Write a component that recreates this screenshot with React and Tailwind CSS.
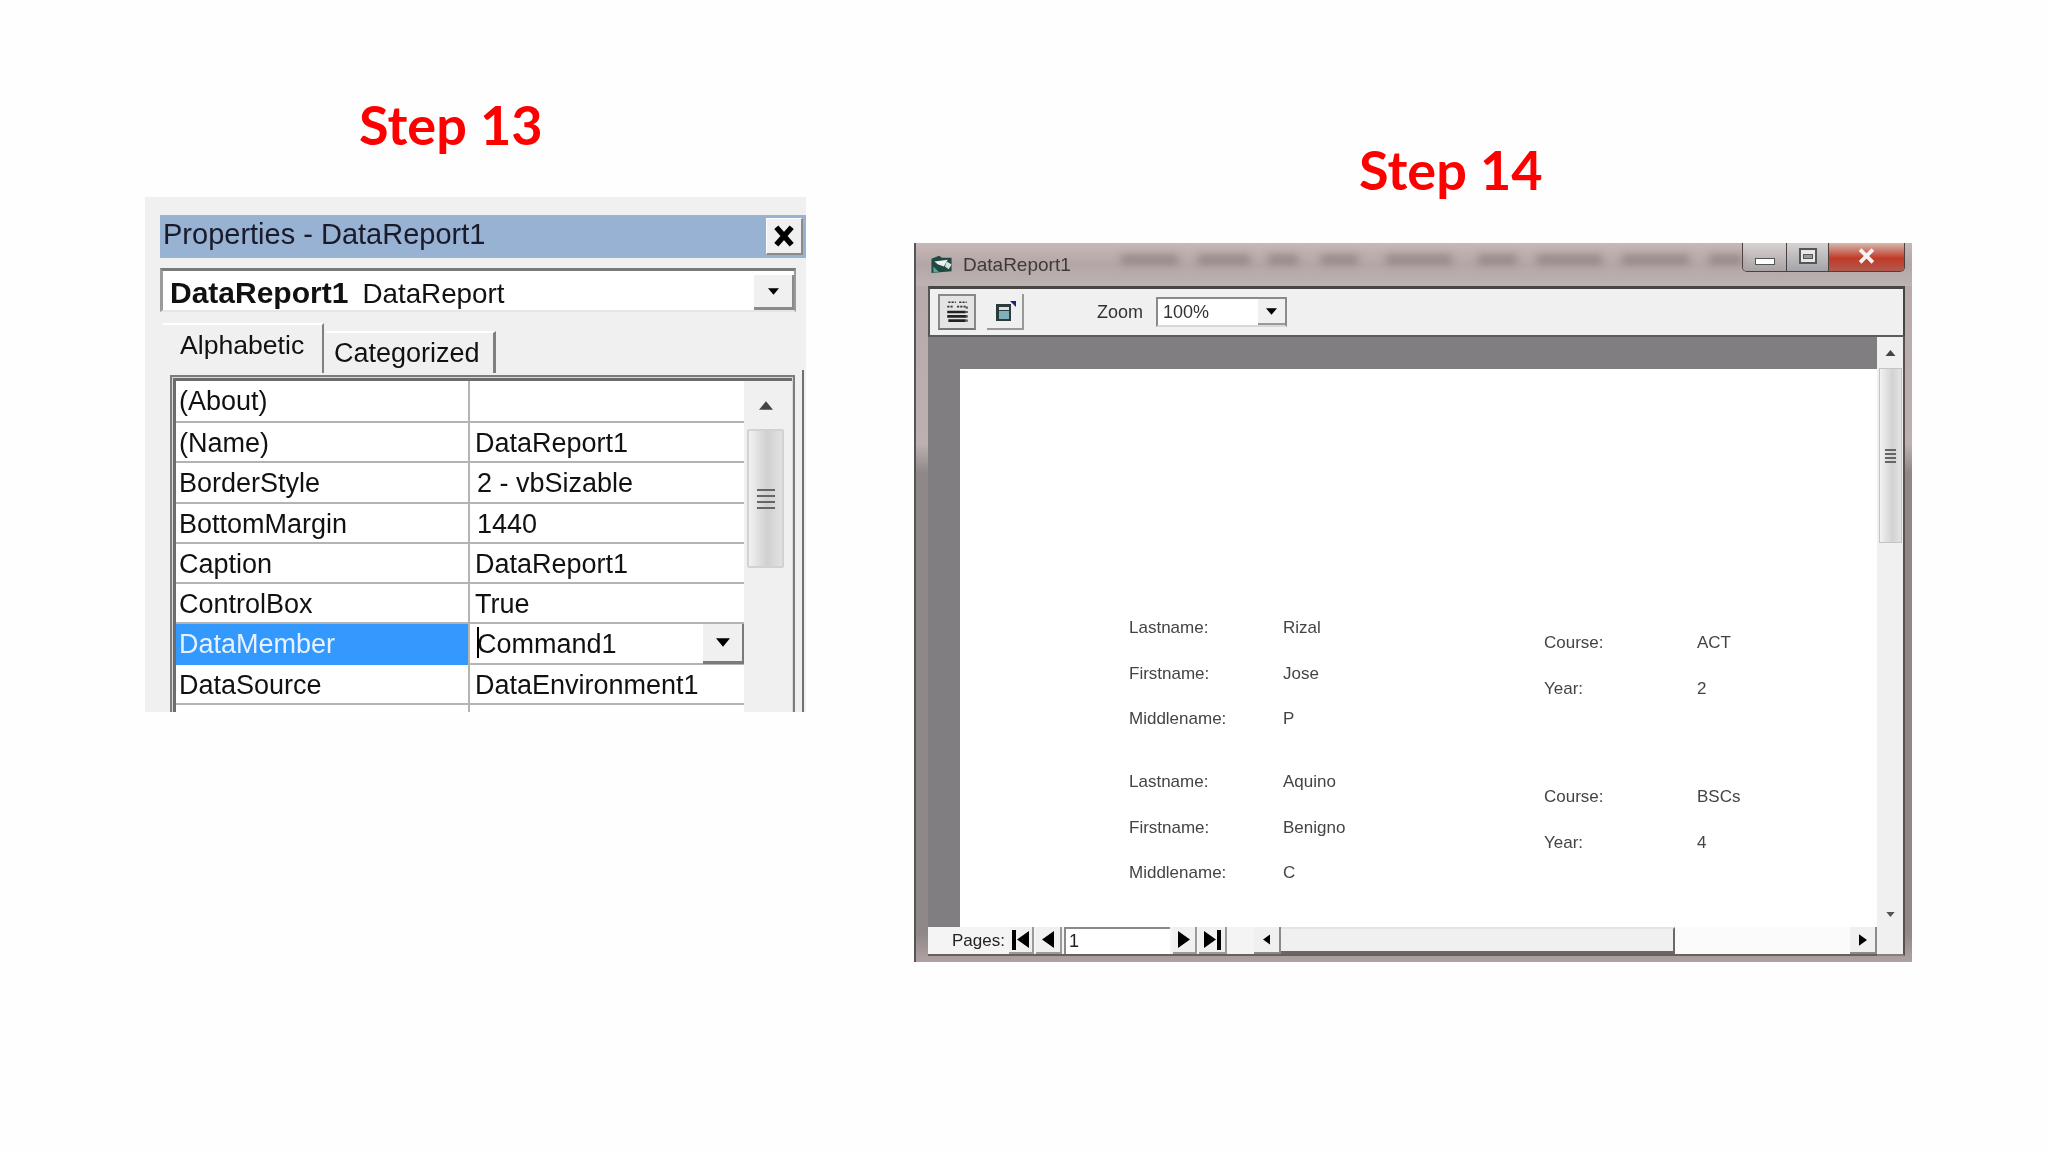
import React from 'react'

const ROWS = [
  ['(About)', ''],
  ['(Name)', 'DataReport1'],
  ['BorderStyle', '2 - vbSizable'],
  ['BottomMargin', '1440'],
  ['Caption', 'DataReport1'],
  ['ControlBox', 'True'],
  ['DataMember', 'Command1'],
  ['DataSource', 'DataEnvironment1'],
  ['', ''],
]

const RECORDS = [
  { last: 'Rizal', first: 'Jose', middle: 'P', course: 'ACT', year: '2' },
  { last: 'Aquino', first: 'Benigno', middle: 'C', course: 'BSCs', year: '4' },
]

const BLURS = ['w-[57px] ml-[45px]', 'w-[52px] ml-[20px]', 'w-[30px] ml-[18px]', 'w-[37px] ml-[23px]', 'w-[66px] ml-[28px]', 'w-[39px] ml-[26px]', 'w-[65px] ml-[20px]', 'w-[67px] ml-[20px]', 'w-[33px] ml-[20px]']

const Tri = ({ dir = 'down', className = '' }) => {
  const pts = { down: '0,0 10,0 5,6', up: '0,6 10,6 5,0', left: '7,0 7,10 0,5', right: '0,0 0,10 7,5' }[dir]
  const box = dir === 'left' || dir === 'right' ? '0 0 7 10' : '0 0 10 6'
  return <svg viewBox={box} className={className}><polygon points={pts} fill="currentColor" /></svg>
}

const Grip = ({ className = '' }) => (
  <div className={`flex flex-col ${className}`}>
    <div className="h-[2px] bg-[#666]" />
    <div className="h-[2px] bg-[#666]" />
    <div className="h-[2px] bg-[#666]" />
    <div className="h-[2px] bg-[#666]" />
  </div>
)

const NavBtn = ({ width, dir, bar }) => (
  <div className={`${width} h-full flex items-center justify-center gap-[1px] bg-[#f0f0f0] border-r-2 border-b-2 border-[#9a9a9a] text-black`}>
    {bar === 'left' && <div className="w-[4px] h-[20px] bg-black" />}
    <Tri dir={dir} className="w-[12px] h-[21px]" />
    {bar === 'right' && <div className="w-[4px] h-[20px] bg-black" />}
  </div>
)

const Field = ({ label, value, labelWidth }) => (
  <div className="flex items-center h-[45.7px] text-[17px] text-[#444]">
    <span className={labelWidth}>{label}</span>
    <span>{value}</span>
  </div>
)

export default function App() {
  return (
    <div className="w-[2048px] h-[1152px] bg-[#fefefe] flex items-start overflow-hidden font-['Liberation_Sans',sans-serif]">
      {/* Step 13 */}
      <div className="ml-[145px] w-[661px] flex flex-col">
        <h1 className="ml-[214px] mt-[89px] h-[108px] font-['Lato',sans-serif] font-bold text-[54px] leading-[72px] text-[#ff0000]">Step 13</h1>
        <div className="h-[515px] bg-[#f0f0f0] overflow-hidden pl-[15px] pt-[18px] blur-[0.4px]">
          <div className="h-[43px] bg-[#97b2d2] flex items-center justify-between pl-[3px] pr-[3px]">
            <span className="text-[29px] text-[#1a1a2a] pb-1">Properties - DataReport1</span>
            <div className="w-[37px] h-[37px] bg-[#f0f0f0] border-r-2 border-b-2 border-[#8a8a8a] border-t border-l border-t-white border-l-white flex items-center justify-center">
              <svg viewBox="0 0 20 20" className="w-[22px] h-[24px]"><path d="M3 2 L17 18 M17 2 L3 18" stroke="#000" strokeWidth="5" /></svg>
            </div>
          </div>

          <div className="mt-[10px] w-[636px] h-[44px] bg-white border-t-[3px] border-l-[3px] border-r-[2px] border-b-[2px] border-t-[#7a7a7a] border-l-[#9a9a9a] border-r-[#9a9a9a] border-b-[#e6e6e6] flex items-center justify-between pl-[7px]">
            <span className="text-[27.8px] text-[#111] pt-[3px]"><b className="text-[30px] mr-[14px]">DataReport1</b>DataReport</span>
            <div className="w-[40px] h-[35px] mt-[4px] bg-[#f0f0f0] border-r-2 border-b-[3px] border-[#8a8a8a] flex items-center justify-center">
              <Tri className="w-[11px] h-[7px] text-black" />
            </div>
          </div>

          <div className="mt-[11px] h-[50px] flex items-end ml-[3px] text-[#111]">
            <div className="w-[161px] h-[50px] border-t-2 border-t-white border-r-2 border-r-[#808080] flex items-center pl-[17px] pb-[6px] text-[26.6px]">Alphabetic</div>
            <div className="ml-[2px] w-[170px] h-[42px] border-t-2 border-t-white border-r-[3px] border-r-[#808080] flex items-center pl-[8px] text-[27px]">Categorized</div>
          </div>

          <div className="mt-[2px] ml-[10px] flex items-stretch">
            <div className="w-[625px] border-[2px] border-[#7c7c7c] bg-[#d9d9d9] p-[1px]">
              <div className="border-l-[3px] border-t-[3px] border-[#6c6c6c] bg-[#f0f0f0] flex">
                <div className="w-[568px] bg-white">
                  {ROWS.map(([name, value], i) => (
                    <div key={i} className={`grid grid-cols-[294px_1fr] text-[27px] text-[#111] ${i === 0 ? 'h-[42px]' : 'h-[40.3px]'} border-b-2 border-[#b4b4b4]`}>
                      <div className={`flex items-center pl-[3px] border-r-2 border-[#b4b4b4] ${name === 'DataMember' ? 'bg-[#3399ff] text-[#e8f2ff]' : ''}`}>{name}</div>
                      {name === 'DataMember' ? (
                        <div className="flex items-center relative">
                          <div className="absolute left-[7px] top-[3px] w-[2px] h-[31px] bg-black" />
                          <span className="pl-[7px]">{value}</span>
                          <div className="ml-auto w-[41px] h-[40px] -mt-[2px] bg-[#f0f0f0] border-r-2 border-b-[3px] border-[#7a7a7a] flex items-center justify-center">
                            <Tri className="w-[14px] h-[9px] text-black" />
                          </div>
                        </div>
                      ) : (
                        <div className={`flex items-center ${/^[12] ?/.test(value) ? 'pl-[7px]' : 'pl-[5px]'}`}>{value}</div>
                      )}
                    </div>
                  ))}
                </div>
                <div className="w-[43px] flex flex-col items-start pl-[3px]">
                  <div className="h-[48px] w-full flex items-center justify-center pr-[3px]">
                    <Tri dir="up" className="w-[14px] h-[9px] text-[#444]" />
                  </div>
                  <div className="w-[37px] h-[139px] bg-[linear-gradient(to_right,#f2f2f2,#d0d0d0_55%,#e2e2e2)] border-2 border-[#d2d2d2] rounded-[2px] flex items-center justify-center">
                    <Grip className="w-[18px] gap-[4px]" />
                  </div>
                </div>
              </div>
            </div>
            <div className="ml-[7px] -mt-[5px] w-[2px] bg-[#707070]" />
          </div>
        </div>
      </div>

      {/* Step 14 */}
      <div className="ml-[108px] w-[998px] flex flex-col">
        <h1 className="ml-[445px] mt-[134px] h-[109px] font-['Lato',sans-serif] font-bold text-[54px] leading-[72px] text-[#ff0000]">Step 14</h1>
        <div className="h-[719px] flex flex-col pl-[12px] pr-[7px] pb-[6px] border-l-2 border-[#555] blur-[0.4px] bg-[linear-gradient(to_bottom,#b7a9a9_0%,#bcb0b0_28%,#8f8888_32%,#8f8888_96%,#b0a2a2_100%)]">
          {/* title bar */}
          <div className="h-[43px] -ml-[12px] -mr-[7px] pl-[14px] pr-[7px] flex items-start bg-[linear-gradient(to_bottom,#c8b8b8,#b3a6a6_50%,#bdb3b3)]">
            <svg viewBox="0 0 24 24" className="w-[24px] h-[23px] mt-[9px]">
              <path d="M1 7 L9 4 L12 6 L22 6 L22 20 L1 22 Z" fill="#1f4a44" />
              <path d="M4 10 L18 8 L14 15 L8 13 Z" fill="#eef2ee" />
              <path d="M17 10 L22 13 L19 18 L15 15 Z" fill="#d8e0dc" />
              <path d="M3 15 L9 21 L3 21 Z" fill="#58a890" />
            </svg>
            <span className="ml-[9px] mt-[8px] text-[19px] leading-[28px] text-[#3f3a3a]">DataReport1</span>
            <div className="flex items-center h-[30px] pl-[5px]">
              {BLURS.map((b, i) => (
                <div key={i} className={`${b} h-[9px] mt-[2px] bg-[#6e6060] opacity-50 blur-[4px]`} />
              ))}
            </div>
            <div className="ml-auto flex h-[29px] w-[163px] rounded-b-[5px] border border-t-0 border-[#4a4040] overflow-hidden">
              <div className="w-[44px] flex items-end justify-center pb-[6px] border-r border-[#4a4040] bg-[linear-gradient(to_bottom,#d8d2d2,#a9a2a2)]">
                <div className="w-[20px] h-[7px] bg-white border border-[#555]" />
              </div>
              <div className="w-[42px] flex items-center justify-center pb-[2px] border-r border-[#4a4040] bg-[linear-gradient(to_bottom,#d8d2d2,#a3a3a8)]">
                <div className="w-[18px] h-[16px] bg-[#e8e8e8] border-2 border-[#555] flex items-center justify-center">
                  <div className="w-[10px] h-[5px] bg-[#999] border border-[#555]" />
                </div>
              </div>
              <div className="flex-1 flex items-start justify-center pt-[5px] bg-[linear-gradient(to_bottom,#d5b8b0,#c03a26_55%,#b25a50)]">
                <svg viewBox="0 0 16 14" className="w-[17px] h-[16px]"><path d="M2 1 L14 13 M14 1 L2 13" stroke="#f4f4f4" strokeWidth="3.5" /></svg>
              </div>
            </div>
          </div>

          {/* toolbar */}
          <div className="h-[51px] bg-[#f0f0f0] border-t-[3px] border-b-2 border-l-2 border-r-2 border-t-[#4a4545] border-b-[#5c5c5c] border-l-[#555] border-r-[#444] flex items-center pl-[8px] shrink-0">
            <div className="w-[38px] h-[36px] bg-[#e4e4e4] border-2 border-[#888] border-b-[#777] flex items-center justify-center">
              <svg viewBox="0 0 24 24" className="w-[26px] h-[26px]">
                <path d="M4 3 H11 M14 3 H21 M3 7 H9 M12 7 H20" stroke="#333" strokeWidth="1.5" strokeDasharray="2 1" />
                <path d="M3 12 H20 M3 16 H21 M4 20 H20" stroke="#222" strokeWidth="2.4" />
                <path d="M21 7 V22" stroke="#555" strokeWidth="2" strokeDasharray="2 2" />
              </svg>
            </div>
            <div className="ml-[11px] w-[37px] h-[36px] border-r-2 border-b-2 border-[#999] flex items-center justify-center">
              <svg viewBox="0 0 24 24" className="w-[24px] h-[24px]">
                <path d="M17 2 H23 V8 Z" fill="#22227a" />
                <rect x="3" y="5" width="15" height="17" fill="#2c3a3a" />
                <rect x="6" y="8" width="10" height="3" fill="#d8e0e0" />
                <rect x="6" y="12" width="10" height="8" fill="#7fb0b8" />
              </svg>
            </div>
            <span className="ml-[73px] text-[18px] text-[#333]">Zoom</span>
            <div className="ml-[13px] w-[131px] h-[30px] bg-white border-2 border-[#8a8a8a] border-b-[#d8d8d8] border-r-[#8a8a8a] flex items-center justify-between pl-[5px]">
              <span className="text-[18px] text-[#333]">100%</span>
              <div className="w-[27px] h-full bg-[#f0f0f0] border-b-2 border-[#999] flex items-center justify-center">
                <Tri className="w-[11px] h-[7px] text-black" />
              </div>
            </div>
          </div>

          {/* report area */}
          <div className="flex-1 flex min-h-0">
            <div className="w-[950px] flex flex-col">
              <div className="flex-1 bg-[#807e80] pt-[32px] pl-[32px] min-h-0">
                <div className="h-full bg-white pt-[236px] pl-[169px]">
                  {RECORDS.map((r, i) => (
                    <div key={i} className="h-[154px] flex items-start">
                      <div className="w-[415px]">
                        <Field label="Lastname:" value={r.last} labelWidth="w-[154px]" />
                        <Field label="Firstname:" value={r.first} labelWidth="w-[154px]" />
                        <Field label="Middlename:" value={r.middle} labelWidth="w-[154px]" />
                      </div>
                      <div className="mt-[15px]">
                        <Field label="Course:" value={r.course} labelWidth="w-[153px]" />
                        <Field label="Year:" value={r.year} labelWidth="w-[153px]" />
                      </div>
                    </div>
                  ))}
                </div>
              </div>
              <div className="h-[29px] shrink-0 bg-[#f4f4f4] border-b-2 border-[#6a5f5f] flex items-stretch pl-[24px]">
                <span className="w-[57px] self-center text-[17px] text-[#222]">Pages:</span>
                <NavBtn width="w-[25px]" dir="left" bar="left" />
                <div className="w-[2px]" />
                <NavBtn width="w-[26px]" dir="left" />
                <div className="ml-[2px] w-[106px] bg-white border-t-2 border-l-2 border-[#8a8a8a] pl-[3px] text-[18px] leading-[24px] text-[#222]">1</div>
                <div className="w-[3px]" />
                <NavBtn width="w-[24px]" dir="right" />
                <div className="w-[2px]" />
                <NavBtn width="w-[28px]" dir="right" bar="right" />
                <div className="w-[27px]" />
                <div className="w-[27px] bg-[#f0f0f0] border-r-2 border-b-2 border-[#8a8a8a] flex items-center justify-center">
                  <Tri dir="left" className="w-[7px] h-[11px] text-black" />
                </div>
                <div className="w-[394px] bg-[#f0f0f0] border-t-2 border-t-[#e4e4e4] border-r-2 border-r-[#6a6a6a] border-b-[3px] border-b-[#6f6464]" />
                <div className="w-[175px] bg-[#fbfbfb]" />
                <div className="w-[27px] bg-[#f0f0f0] border-r-2 border-b-2 border-[#8a8a8a] flex items-center justify-center">
                  <Tri dir="right" className="w-[8px] h-[12px] text-black" />
                </div>
              </div>
            </div>

            {/* vertical scrollbar */}
            <div className="w-[28px] bg-[#f0f0f0] border-r-2 border-[#5a5050] border-b-2 border-b-[#8a7d7d] flex flex-col items-center">
              <div className="h-[31px] flex items-center justify-center">
                <Tri dir="up" className="w-[11px] h-[6px] text-[#444]" />
              </div>
              <div className="w-[23px] h-[175px] -mr-[1px] bg-[linear-gradient(to_right,#f2f2f2,#d2d2d2_60%,#e4e4e4)] border border-[#c4c4c4] flex items-center justify-center">
                <Grip className="w-[11px] gap-[2px]" />
              </div>
              <div className="mt-auto mb-[37px]">
                <Tri className="w-[11px] h-[5px] text-[#555]" />
              </div>
            </div>
          </div>
        </div>
      </div>
    </div>
  )
}
